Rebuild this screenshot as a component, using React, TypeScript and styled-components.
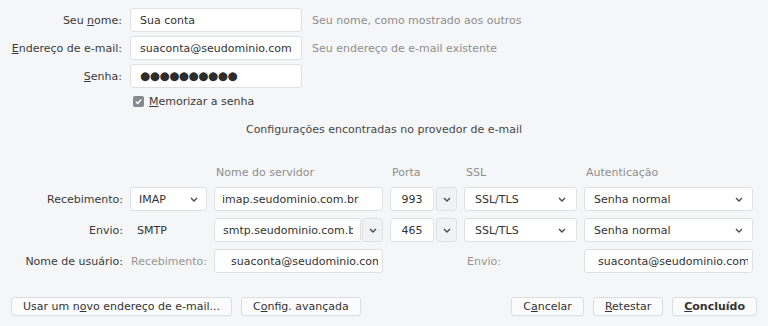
import React from 'react';
import styled, { createGlobalStyle } from 'styled-components';

const GlobalStyle = createGlobalStyle`
  html, body {
    margin: 0;
    padding: 0;
  }
  body {
    background: #f5f6f7;
    font-family: "DejaVu Sans", sans-serif;
    font-size: 11px;
    color: #333333;
    overflow: hidden;
  }
`;

const Page = styled.div`
  width: 768px;
  height: 326px;
  box-sizing: border-box;
  padding-top: 8px;
  display: flex;
  flex-direction: column;
`;

const Identity = styled.div`
  display: grid;
  grid-template-columns: 122px 172px 1fr;
  column-gap: 8px;
  row-gap: 4px;
  align-items: center;
`;

const Label = styled.label`
  text-align: right;
  white-space: nowrap;
  color: #3a3a3a;
`;

const Hint = styled.span<{ $indent?: number }>`
  color: #8e8e8e;
  padding-left: ${({ $indent }) => $indent ?? 0}px;
  white-space: nowrap;
`;

const Field = styled.div<{ $pad?: number; $right?: number; $center?: boolean; $width?: number }>`
  height: 24px;
  box-sizing: border-box;
  background: #ffffff;
  border: 1px solid #dfe0e3;
  border-radius: 3px;
  display: flex;
  align-items: center;
  justify-content: ${({ $center }) => ($center ? 'center' : 'flex-start')};
  padding: 0 ${({ $right, $pad }) => $right ?? $pad ?? 9}px 0 ${({ $pad }) => $pad ?? 9}px;
  white-space: nowrap;
  overflow: hidden;
  color: #333333;
  ${({ $width }) => ($width ? `width: ${$width}px; flex: none;` : '')}
`;

// scrolled input text: clipped at the content box like a real entry
const Value = styled.span`
  overflow: hidden;
  white-space: nowrap;
  min-width: 0;
`;

const Dots = styled.span`
  font-size: 11.6px;
  letter-spacing: -0.4px;
  color: #2c2c2c;
`;

const Select = styled(Field)`
  justify-content: space-between;
`;

const DropButton = styled.div<{ $width: number }>`
  width: ${({ $width }) => $width}px;
  height: 24px;
  box-sizing: border-box;
  flex: none;
  background: #f1f2f4;
  border: 1px solid #dfe0e3;
  border-radius: 3px;
  display: flex;
  align-items: center;
  justify-content: center;
`;

const Combo = styled.div<{ $gap: number }>`
  display: flex;
  gap: ${({ $gap }) => $gap}px;
`;

const RememberRow = styled.div`
  display: flex;
  align-items: center;
  gap: 5px;
  margin: 4px 0 0 133px;
  height: 18px;
  color: #3a3a3a;
`;

const CheckBox = styled.span`
  width: 11px;
  height: 11px;
  border-radius: 2px;
  background: #86898d;
  display: flex;
  align-items: center;
  justify-content: center;
`;

const Heading = styled.div`
  text-align: center;
  color: #474747;
  margin-top: 13px;
  line-height: 14px;
`;

const ServerGrid = styled.div`
  display: grid;
  grid-template-columns: 123px 77px 169px 67px 113px 169px;
  column-gap: 7px;
  row-gap: 7px;
  align-items: center;
  margin-top: 29px;
`;

const ColHead = styled.span`
  color: #8e8e8e;
  padding-left: 2px;
  line-height: 14px;
  white-space: nowrap;
`;

const Plain = styled.span<{ $indent: number; $muted?: boolean }>`
  padding-left: ${({ $indent }) => $indent}px;
  color: ${({ $muted }) => ($muted ? '#959595' : '#333333')};
  white-space: nowrap;
`;

const Footer = styled.div`
  margin-top: auto;
  padding: 0 11px 10px;
  display: flex;
  justify-content: space-between;
`;

const ButtonGroup = styled.div`
  display: flex;
  gap: 9px;
`;

const Button = styled.button<{ $primary?: boolean }>`
  height: 19px;
  box-sizing: border-box;
  padding: 0 11px;
  background: #fbfbfc;
  border: 1px solid #dcdde0;
  border-radius: 3px;
  font-family: "DejaVu Sans", sans-serif;
  font-size: 11px;
  font-weight: ${({ $primary }) => ($primary ? 700 : 400)};
  color: #333333;
  line-height: 17px;
`;

const Chevron = () => (
  <svg width="8" height="5" viewBox="0 0 8 5">
    <polyline points="1,1 4,4 7,1" fill="none" stroke="#4a4a4a" strokeWidth="1.4" />
  </svg>
);

const Check = () => (
  <svg width="9" height="9" viewBox="0 0 9 9">
    <polyline points="1.8,4.6 3.7,6.4 7.2,2.6" fill="none" stroke="#ffffff" strokeWidth="1.5" />
  </svg>
);

const App: React.FC = () => (
  <Page>
    <GlobalStyle />
    <Identity>
      <Label>Seu <u>n</u>ome:</Label>
      <Field>Sua conta</Field>
      <Hint $indent={2}>Seu nome, como mostrado aos outros</Hint>

      <Label><u>E</u>ndereço de e-mail:</Label>
      <Field>suaconta@seudominio.com</Field>
      <Hint $indent={2}>Seu endereço de e-mail existente</Hint>

      <Label><u>S</u>enha:</Label>
      <Field>
        <Dots>●●●●●●●●●●</Dots>
      </Field>
      <span />
    </Identity>

    <RememberRow>
      <CheckBox>
        <Check />
      </CheckBox>
      <span><u>M</u>emorizar a senha</span>
    </RememberRow>

    <Heading>Configurações encontradas no provedor de e-mail</Heading>

    <ServerGrid>
      <span />
      <span />
      <ColHead>Nome do servidor</ColHead>
      <ColHead>Porta</ColHead>
      <ColHead>SSL</ColHead>
      <ColHead>Autenticação</ColHead>

      <Label>Recebimento:</Label>
      <Select $pad={8}>
        IMAP
        <Chevron />
      </Select>
      <Field $pad={7}>imap.seudominio.com.br</Field>
      <Combo $gap={2}>
        <Field $width={44} $center $pad={0}>993</Field>
        <DropButton $width={21}>
          <Chevron />
        </DropButton>
      </Combo>
      <Select $pad={10}>
        SSL/TLS
        <Chevron />
      </Select>
      <Select $pad={9}>
        Senha normal
        <Chevron />
      </Select>

      <Label>Envio:</Label>
      <Plain $indent={7}>SMTP</Plain>
      <Combo $gap={1}>
        <Field $width={147} $pad={8} $right={7}>
          <Value>smtp.seudominio.com.br</Value>
        </Field>
        <DropButton $width={21}>
          <Chevron />
        </DropButton>
      </Combo>
      <Combo $gap={2}>
        <Field $width={44} $center $pad={0}>465</Field>
        <DropButton $width={21}>
          <Chevron />
        </DropButton>
      </Combo>
      <Select $pad={10}>
        SSL/TLS
        <Chevron />
      </Select>
      <Select $pad={9}>
        Senha normal
        <Chevron />
      </Select>

      <Label>Nome de usuário:</Label>
      <Plain $indent={1} $muted>Recebimento:</Plain>
      <Field $pad={16} $right={4}>
        <Value>suaconta@seudominio.com</Value>
      </Field>
      <span />
      <Plain $indent={3} $muted>Envio:</Plain>
      <Field $pad={13} $right={4}>
        <Value>suaconta@seudominio.com</Value>
      </Field>
    </ServerGrid>

    <Footer>
      <ButtonGroup>
        <Button>Usar um n<u>o</u>vo endereço de e-mail...</Button>
        <Button>C<u>o</u>nfig. avançada</Button>
      </ButtonGroup>
      <ButtonGroup>
        <Button>C<u>a</u>ncelar</Button>
        <Button><u>R</u>etestar</Button>
        <Button $primary><u>C</u>oncluído</Button>
      </ButtonGroup>
    </Footer>
  </Page>
);

export default App;
